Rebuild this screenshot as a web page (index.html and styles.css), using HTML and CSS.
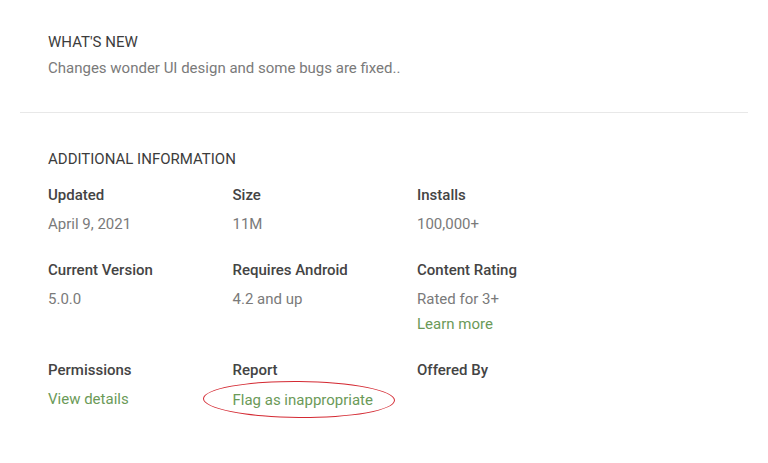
FILE: index.html
```html
<!DOCTYPE html>
<html lang="en">
<head>
    <meta charset="UTF-8">
    <meta name="viewport" content="width=device-width, initial-scale=1.0">
    <title>App Details</title>
    <link rel="stylesheet" href="styles.css">
</head>
<body>
    <div class="details">
        <div class="section whats-new">
            <h2>What's New</h2>
            <p class="text">Changes wonder UI design and some bugs are fixed..</p>
        </div>

        <div class="section additional">
            <h2 class="info-title">Additional Information</h2>

            <div class="info-grid">
                <div class="info-item">
                    <div class="label">Updated</div>
                    <div class="value">April 9, 2021</div>
                </div>
                <div class="info-item">
                    <div class="label">Size</div>
                    <div class="value">11M</div>
                </div>
                <div class="info-item">
                    <div class="label">Installs</div>
                    <div class="value">100,000+</div>
                </div>

                <div class="info-item">
                    <div class="label">Current Version</div>
                    <div class="value">5.0.0</div>
                </div>
                <div class="info-item">
                    <div class="label">Requires Android</div>
                    <div class="value">4.2 and up</div>
                </div>
                <div class="info-item">
                    <div class="label">Content Rating</div>
                    <div class="value">Rated for 3+</div>
                    <div class="value"><a href="#" class="link">Learn more</a></div>
                </div>

                <div class="info-item">
                    <div class="label">Permissions</div>
                    <div class="value"><a href="#" class="link">View details</a></div>
                </div>
                <div class="info-item">
                    <div class="label">Report</div>
                    <div class="value">
                        <a href="#" class="link flag">Flag as inappropriate<span class="circled"></span></a>
                    </div>
                </div>
                <div class="info-item">
                    <div class="label">Offered By</div>
                </div>
            </div>
        </div>
    </div>
</body>
</html>
```

FILE: styles.css
```css
* {
    box-sizing: border-box;
    margin: 0;
    padding: 0;
}

html,
body {
    min-height: 100%;
}

body {
    background-color: #fff;
    font-family: Roboto, 'Noto Sans', sans-serif;
    font-size: 15px;
    color: #333;
    padding-bottom: 48px;
}

.details {
    margin: 0 20px;
}

.section {
    padding: 0 28px;
}

h2 {
    font-size: 15px;
    font-weight: 400;
    line-height: 20px;
    text-transform: uppercase;
    color: #3c3c3c;
}

.whats-new {
    padding-top: 32px;
    padding-bottom: 34px;
    border-bottom: 1px solid #e8e8e8;
}

.whats-new .text {
    margin-top: 6px;
    line-height: 20px;
    color: #7a7a7a;
}

.additional {
    padding-top: 36px;
}

.info-title {
    margin-bottom: 16px;
}

.info-grid {
    display: grid;
    grid-template-columns: repeat(3, 184.5px);
    row-gap: 23px;
}

.label {
    font-weight: 500;
    line-height: 20px;
    margin-bottom: 7px;
    color: #444;
}

.value {
    line-height: 25px;
    color: #7a7a7a;
}

.link {
    color: #6b9a58;
    text-decoration: none;
}

.flag {
    position: relative;
    display: inline-block;
    top: 1px;
}

.circled {
    position: absolute;
    left: -30px;
    top: -7px;
    width: 192px;
    height: 37px;
    border: 1.6px solid #d42a33;
    border-radius: 50%;
    transform: rotate(0.5deg);
    pointer-events: none;
}
```
